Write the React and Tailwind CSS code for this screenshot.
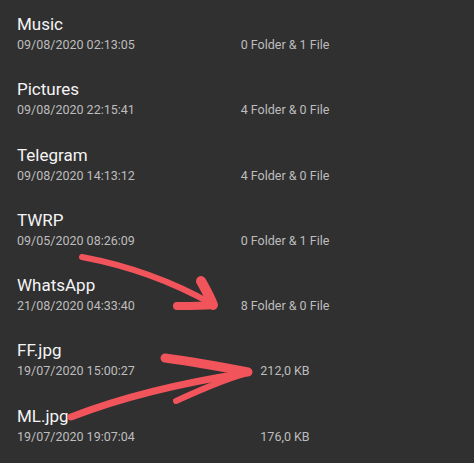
import React from "react";

const items = [
  { name: "Music", date: "09/08/2020 02:13:05", info: "0 Folder & 1 File" },
  { name: "Pictures", date: "09/08/2020 22:15:41", info: "4 Folder & 0 File" },
  { name: "Telegram", date: "09/08/2020 14:13:12", info: "4 Folder & 0 File" },
  { name: "TWRP", date: "09/05/2020 08:26:09", info: "0 Folder & 1 File" },
  { name: "WhatsApp", date: "21/08/2020 04:33:40", info: "8 Folder & 0 File" },
  { name: "FF.jpg", date: "19/07/2020 15:00:27", info: "212,0 KB" },
  { name: "ML.jpg", date: "19/07/2020 19:07:04", info: "176,0 KB" },
];

function Row({ item }) {
  return (
    <div className="h-[65.3px] pl-[17px] pt-[14px]">
      <div className="text-[17px] leading-[20px] text-[#f4f4f4]">{item.name}</div>
      <div className="mt-[3px] flex text-[12.5px] leading-[16px] text-[#bdbdbd]">
        <div className="w-[222px]">{item.date}</div>
        <div className="w-[92px] text-center">{item.info}</div>
      </div>
    </div>
  );
}

function Scribbles() {
  return (
    <svg
      className="pointer-events-none absolute inset-0"
      width="474"
      height="463"
      viewBox="0 0 474 463"
      fill="none"
      stroke="#f2545b"
      strokeLinecap="round"
      strokeLinejoin="round"
    >
      {/* arrow to WhatsApp */}
      <path d="M82 257 C 130 266, 175 283, 212 304" strokeWidth="6" />
      <path d="M201 281 C 206 290, 210 297, 213 305" strokeWidth="10" />
      <path d="M177 306 C 190 306, 202 306, 213 305" strokeWidth="8" />
      {/* arrow to FF.jpg */}
      <path d="M71 417 C 120 398, 180 383, 246 373" strokeWidth="7" />
      <path d="M165 358 C 195 362, 222 367, 248 372" strokeWidth="9" />
      <path d="M176 401 C 200 390, 222 380, 244 374" strokeWidth="6" />
    </svg>
  );
}

export default function App() {
  return (
    <div
      className="relative h-[463px] w-[474px] overflow-hidden bg-[#303030]"
      style={{ fontFamily: "Roboto, 'Noto Sans', sans-serif" }}
    >
      {items.map((item) => (
        <Row key={item.name} item={item} />
      ))}
      <Scribbles />
    </div>
  );
}
